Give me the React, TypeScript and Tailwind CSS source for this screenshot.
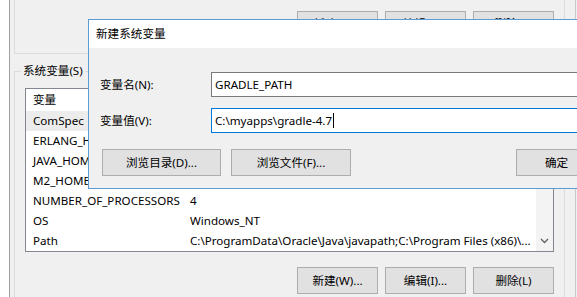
const font = {
  fontFamily: '"Noto Sans", "Noto Sans CJK SC", sans-serif',
}

function WinButton({ label, className = "" }: { label: string; className?: string }) {
  return (
    <div
      className={`flex items-center justify-center bg-[#e1e1e1] border border-[#adadad] text-black ${className}`}
    >
      {label}
    </div>
  )
}

const rows = [
  { name: "ComSpec", value: "", selected: true },
  { name: "ERLANG_HOME", value: "" },
  { name: "JAVA_HOME", value: "" },
  { name: "M2_HOME", value: "" },
  { name: "NUMBER_OF_PROCESSORS", value: "4" },
  { name: "OS", value: "Windows_NT" },
  { name: "Path", value: "C:\\ProgramData\\Oracle\\Java\\javapath;C:\\Program Files (x86)\\..." },
]

function ChevronDown() {
  return (
    <svg width="9" height="6" viewBox="0 0 9 6" fill="none">
      <path d="M1 1 L4.5 4.5 L8 1" stroke="#606060" strokeWidth="1.3" />
    </svg>
  )
}

export default function App() {
  return (
    <div
      className="relative w-[577px] h-[297px] overflow-hidden bg-[#f0f0f0] text-[11.6px] text-black"
      style={font}
    >
      {/* background window: 环境变量 */}
      <div className="flex h-full">
        <div className="w-[10px] h-full bg-white border-r border-[#a0a0a0]" />
        <div className="w-[566px] h-full pl-[4px] border-r border-[#c8c8c8]">
          {/* user variables group (bottom part) */}
          <div className="w-[551px] h-[54px] border-l border-r border-b border-[#dcdcdc]">
            <div className="flex justify-end gap-[7px] pr-[10px] pt-[11px]">
              <WinButton label="新建(N)..." className="w-[81px] h-[26px]" />
              <WinButton label="编辑(E)..." className="w-[81px] h-[26px]" />
              <WinButton label="删除(D)" className="w-[81px] h-[26px]" />
            </div>
          </div>

          {/* system variables group */}
          <fieldset className="w-[551px] mt-[9px] h-[300px] border border-[#dcdcdc]">
            <legend className="ml-[6px] px-[2px] leading-[16px]">系统变量(S)</legend>
            <div className="pl-[10px] mt-[9px]">
              <div className="w-[529px] h-[164px] border border-[#828790] bg-white flex">
                <div className="flex-1 flex flex-col">
                  <div className="h-[22px] flex items-center pl-[7px]">
                    <span className="w-[157px]">变量</span>
                    <span>值</span>
                  </div>
                  {rows.map((r) => (
                    <div
                      key={r.name}
                      className={`h-[20px] flex items-center whitespace-nowrap ${r.selected ? "bg-[#ececec]" : ""}`}
                    >
                      <span className="w-[164px] pl-[7px]">{r.name}</span>
                      <span>{r.value}</span>
                    </div>
                  ))}
                </div>
                <div className="w-[17px] bg-[#f3f3f3] flex flex-col justify-end items-center pb-[7px]">
                  <ChevronDown />
                </div>
              </div>
              <div className="flex justify-end gap-[7px] pr-[10px] mt-[15px]">
                <WinButton label="新建(W)..." className="w-[81px] h-[27px]" />
                <WinButton label="编辑(I)..." className="w-[81px] h-[27px]" />
                <WinButton label="删除(L)" className="w-[81px] h-[27px]" />
              </div>
            </div>
          </fieldset>
        </div>
      </div>

      {/* dialog: 新建系统变量 */}
      <div className="absolute left-[88px] top-[19px] w-[520px] h-[170px] border border-[#5c9bd6] flex flex-col">
        <div className="h-[28px] bg-white pl-[7px] flex items-center">新建系统变量</div>
        <div className="flex-1 bg-[#f0f0f0] pt-[24px] pl-[11px] pr-[10px]">
          <div className="flex items-center h-[25px]">
            <span className="w-[111px]">变量名(N):</span>
            <div className="flex-1 h-[25px] border border-[#7a7a7a] bg-white pl-[3px] flex items-center">
              GRADLE_PATH
            </div>
          </div>
          <div className="flex items-center h-[25px] mt-[11px]">
            <span className="w-[111px]">变量值(V):</span>
            <div className="flex-1 h-[25px] border border-[#0078d7] bg-white pl-[3px] flex items-center">
              C:\myapps\gradle-4.7
              <span className="ml-[1px] w-[1px] h-[15px] bg-black" />
            </div>
          </div>
          <div className="flex mt-[16px]">
            <WinButton label="浏览目录(D)..." className="ml-[2px] w-[119px] h-[27px]" />
            <WinButton label="浏览文件(F)..." className="ml-[10px] w-[120px] h-[27px]" />
            <WinButton label="确定" className="ml-auto w-[81px] h-[27px]" />
          </div>
        </div>
      </div>
    </div>
  )
}
